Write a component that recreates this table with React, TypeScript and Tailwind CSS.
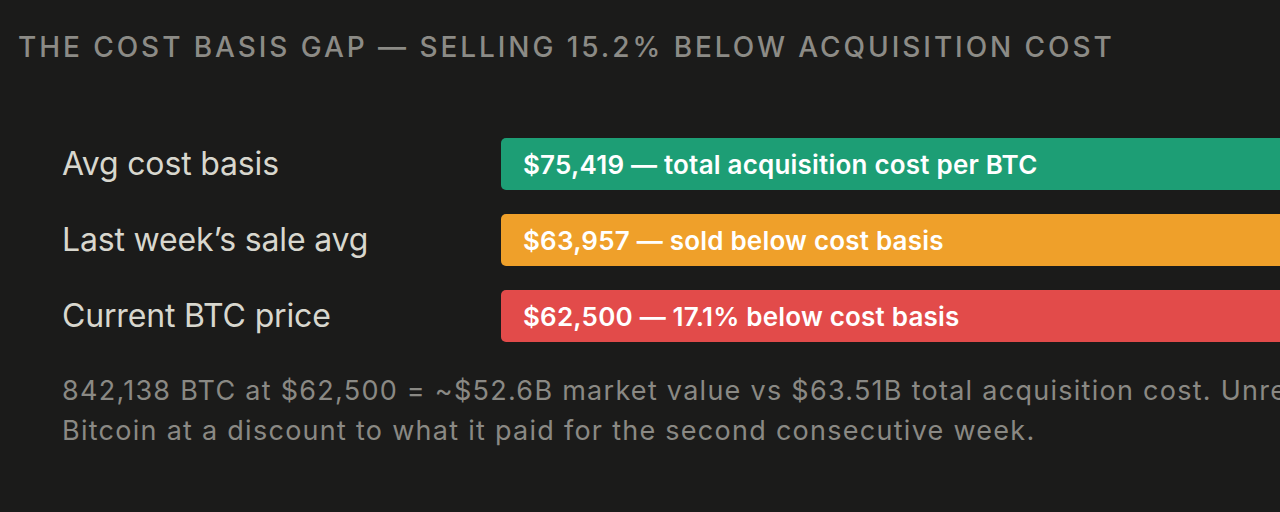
const rows = [
  { label: "Avg cost basis", text: "$75,419 — total acquisition cost per BTC", color: "bg-[#1d9e75]" },
  { label: "Last week’s sale avg", text: "$63,957 — sold below cost basis", color: "bg-[#efa02a]" },
  { label: "Current BTC price", text: "$62,500 — 17.1% below cost basis", color: "bg-[#e24b4a]" },
];

export default function App() {
  return (
    <div
      className="w-[1280px] h-[512px] overflow-hidden bg-[#1b1b1a] antialiased"
      style={{ fontFamily: "Inter, 'Liberation Sans', sans-serif" }}
    >
      <div className="w-[1800px] pt-[31px] pl-[18px]">
        <h2 className="text-[28px] leading-[32px] font-medium tracking-[0.105em] text-[#8c8b86] whitespace-nowrap">
          THE COST BASIS GAP — SELLING 15.2% BELOW ACQUISITION COST
        </h2>

        <div className="pl-[44px] pt-[75px]">
          <div className="flex flex-col gap-[24px]">
            {rows.map((r) => (
              <div key={r.label} className="flex items-center">
                <div className="w-[439px] shrink-0 text-[32px] text-[#d8d7ce] tracking-[-0.005em] whitespace-nowrap">
                  {r.label}
                </div>
                <div
                  className={`${r.color} h-[52px] w-[1100px] rounded-[5px] flex items-center px-[22px] text-[26px] font-semibold tracking-[0.008em] text-white whitespace-nowrap`}
                >
                  {r.text}
                </div>
              </div>
            ))}
          </div>

          <p className="mt-[29px] text-[27px] leading-[40px] tracking-[0.047em] text-[#8a8984] whitespace-nowrap">
            842,138 BTC at $62,500 = ~$52.6B market value vs $63.51B total acquisition cost. Unrealized loss of ~$10.9B; Strategy is selling
            <br />
            Bitcoin at a discount to what it paid for the second consecutive week.
          </p>
        </div>
      </div>
    </div>
  );
}
